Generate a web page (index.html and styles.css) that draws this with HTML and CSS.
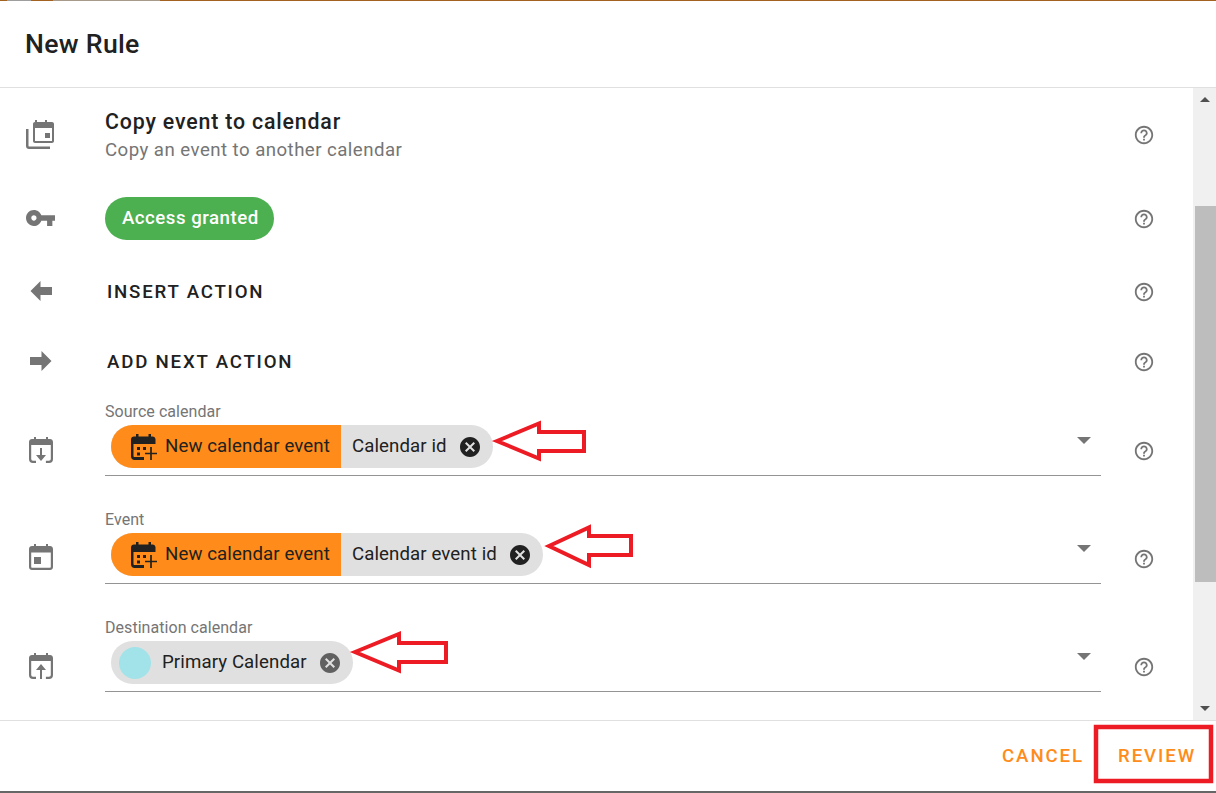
FILE: index.html
```html
<!DOCTYPE html>
<html lang="en">
<head>
<meta charset="utf-8">
<title>New Rule</title>
<link rel="stylesheet" href="styles.css">
</head>
<body>
<div class="dialog">
  <header class="head"><h1 class="title">New Rule</h1></header>
  <div class="middle">
    <main class="rows">
      <section class="row row-first">
        <div class="lead"><svg class="ic-copy" viewBox="0 0 30 30"><path fill="#757575" d="M9 0h2v2h8V0h2v2h5c1.100 0 2 .9 2 2v17c0 1.100-.9 2-2 2H9c-1.100 0-2-.9-2-2V4c0-1.100.9-2 2-2zM9 8v13h17V8z"/><path fill="#757575" d="M19 13h5v5h-5z"/><path fill="#757575" d="M0 9h2.500v17c0 .3.200.500.500.500h21V29H3c-1.700 0-3-1.300-3-3z"/></svg></div>
        <div class="main">
          <div class="name">Copy event to calendar</div>
          <div class="desc">Copy an event to another calendar</div>
        </div>
        <div class="help"><svg class="ic-help" viewBox="0 0 24 24"><path d="M11 18h2v-2h-2v2zm1-16C6.480 2 2 6.480 2 12s4.480 10 10 10 10-4.480 10-10S17.520 2 12 2zm0 18c-4.410 0-8-3.590-8-8s3.590-8 8-8 8 3.590 8 8-3.590 8-8 8zm0-14c-2.210 0-4 1.790-4 4h2c0-1.100.9-2 2-2s2 .9 2 2c0 2-3 1.750-3 5h2c0-2.250 3-2.500 3-5 0-2.210-1.790-4-4-4z"/></svg></div>
      </section>
      <section class="row row-access">
        <div class="lead"><svg class="ic-key" viewBox="1 6 22 12"><path fill="#757575" d="M12.650 10C11.830 7.670 9.610 6 7 6c-3.310 0-6 2.690-6 6s2.690 6 6 6c2.610 0 4.830-1.670 5.650-4H17v4h4v-4h2v-4H12.650zM7 14c-1.100 0-2-.9-2-2s.9-2 2-2 2 .9 2 2-.9 2-2 2z"/></svg></div>
        <div class="main"><span class="badge">Access granted</span></div>
        <div class="help"><svg class="ic-help" viewBox="0 0 24 24"><path d="M11 18h2v-2h-2v2zm1-16C6.480 2 2 6.480 2 12s4.480 10 10 10 10-4.480 10-10S17.520 2 12 2zm0 18c-4.410 0-8-3.590-8-8s3.590-8 8-8 8 3.590 8 8-3.590 8-8 8zm0-14c-2.210 0-4 1.790-4 4h2c0-1.100.9-2 2-2s2 .9 2 2c0 2-3 1.750-3 5h2c0-2.250 3-2.500 3-5 0-2.210-1.790-4-4-4z"/></svg></div>
      </section>
      <section class="row row-action">
        <div class="lead"><svg class="ic-arrow" viewBox="0 0 22 20"><path fill="#757575" d="M0.500 10 10.500 0v6H22v8H10.500v6z"/></svg></div>
        <div class="main"><span class="action">INSERT ACTION</span></div>
        <div class="help"><svg class="ic-help" viewBox="0 0 24 24"><path d="M11 18h2v-2h-2v2zm1-16C6.480 2 2 6.480 2 12s4.480 10 10 10 10-4.480 10-10S17.520 2 12 2zm0 18c-4.410 0-8-3.590-8-8s3.590-8 8-8 8 3.590 8 8-3.590 8-8 8zm0-14c-2.210 0-4 1.790-4 4h2c0-1.100.9-2 2-2s2 .9 2 2c0 2-3 1.750-3 5h2c0-2.250 3-2.500 3-5 0-2.210-1.790-4-4-4z"/></svg></div>
      </section>
      <section class="row row-action">
        <div class="lead"><svg class="ic-arrow" viewBox="0 0 22 20"><path fill="#757575" d="M21.500 10 11.500 0v6H0v8h11.500v6z"/></svg></div>
        <div class="main"><span class="action">ADD NEXT ACTION</span></div>
        <div class="help"><svg class="ic-help" viewBox="0 0 24 24"><path d="M11 18h2v-2h-2v2zm1-16C6.480 2 2 6.480 2 12s4.480 10 10 10 10-4.480 10-10S17.520 2 12 2zm0 18c-4.410 0-8-3.590-8-8s3.590-8 8-8 8 3.590 8 8-3.590 8-8 8zm0-14c-2.210 0-4 1.790-4 4h2c0-1.100.9-2 2-2s2 .9 2 2c0 2-3 1.750-3 5h2c0-2.250 3-2.500 3-5 0-2.210-1.790-4-4-4z"/></svg></div>
      </section>
      <section class="row row-field">
        <div class="lead"><svg class="ic-cal" viewBox="0 0 24 26"><path fill="#757575" d="M5 0h2v2h10V0h2v2h2c1.700 0 3 1.300 3 3v3H0V5c0-1.700 1.300-3 3-3h2z"/><path fill="none" stroke="#757575" stroke-width="2.200" d="M1.100 8v14c0 1.600 1.300 2.900 2.900 2.900h3M16.900 24.900H20c1.600 0 2.900-1.300 2.900-2.900V8"/><path fill="#757575" d="M11 11h2v7h4l-5 6-5-6h4z"/></svg></div>
        <div class="main field">
          <label class="label">Source calendar</label>
          <div class="input">
            <div class="chip">
              <span class="chip-src"><svg class="ic-new" viewBox="0 0 26 26"><path fill="#212121" d="M5 0h2.500v2.500h10V0H20v2.500h1.500c1.700 0 3 1.300 3 3V10H2.500v12c0 .6.400 1 1 1H13v3H3.500C1.500 26 0 24.500 0 22.500v-17c0-1.700 1.300-3 3-3h2z"/><path fill="#212121" d="M6 13h3v3H6zM12 13h3v3h-3zM6 18.500h3v3H6z"/><path fill="none" stroke="#212121" stroke-width="1.700" d="M20 13v13M14 19.500h12"/></svg><span class="chip-text">New calendar event</span></span>
              <span class="chip-val"><span class="chip-text">Calendar id</span><svg class="ic-x" viewBox="2 2 20 20"><path fill="#212121" d="M12 2C6.470 2 2 6.470 2 12s4.470 10 10 10 10-4.470 10-10S17.530 2 12 2zm5 13.590L15.590 17 12 13.410 8.410 17 7 15.590 10.590 12 7 8.410 8.410 7 12 10.590 15.590 7 17 8.410 13.410 12 17 15.590z"/></svg></span>
            </div>
            <span class="caret"></span>
          </div>
        </div>
        <div class="help"><svg class="ic-help" viewBox="0 0 24 24"><path d="M11 18h2v-2h-2v2zm1-16C6.480 2 2 6.480 2 12s4.480 10 10 10 10-4.480 10-10S17.520 2 12 2zm0 18c-4.410 0-8-3.590-8-8s3.590-8 8-8 8 3.590 8 8-3.590 8-8 8zm0-14c-2.210 0-4 1.790-4 4h2c0-1.100.9-2 2-2s2 .9 2 2c0 2-3 1.750-3 5h2c0-2.250 3-2.500 3-5 0-2.210-1.790-4-4-4z"/></svg></div>
      </section>
      <section class="row row-field">
        <div class="lead"><svg class="ic-cal ic-event" viewBox="0 0 24 26"><path fill="#757575" d="M5 0h2v2h10V0h2v2h2c1.700 0 3 1.300 3 3v18c0 1.700-1.300 3-3 3H3c-1.700 0-3-1.300-3-3V5c0-1.700 1.300-3 3-3h2zM2.200 8.500v14.500c0 .5.300.8.800.8h18c.5 0 .8-.3.800-.8V8.500z"/><path fill="#757575" d="M5 13h7v7H5z"/></svg></div>
        <div class="main field">
          <label class="label">Event</label>
          <div class="input">
            <div class="chip">
              <span class="chip-src"><svg class="ic-new" viewBox="0 0 26 26"><path fill="#212121" d="M5 0h2.500v2.500h10V0H20v2.500h1.500c1.700 0 3 1.300 3 3V10H2.500v12c0 .6.400 1 1 1H13v3H3.500C1.500 26 0 24.500 0 22.500v-17c0-1.700 1.300-3 3-3h2z"/><path fill="#212121" d="M6 13h3v3H6zM12 13h3v3h-3zM6 18.500h3v3H6z"/><path fill="none" stroke="#212121" stroke-width="1.700" d="M20 13v13M14 19.500h12"/></svg><span class="chip-text">New calendar event</span></span>
              <span class="chip-val"><span class="chip-text">Calendar event id</span><svg class="ic-x" viewBox="2 2 20 20"><path fill="#212121" d="M12 2C6.470 2 2 6.470 2 12s4.470 10 10 10 10-4.470 10-10S17.530 2 12 2zm5 13.590L15.590 17 12 13.410 8.410 17 7 15.590 10.590 12 7 8.410 8.410 7 12 10.590 15.590 7 17 8.410 13.410 12 17 15.590z"/></svg></span>
            </div>
            <span class="caret"></span>
          </div>
        </div>
        <div class="help"><svg class="ic-help" viewBox="0 0 24 24"><path d="M11 18h2v-2h-2v2zm1-16C6.480 2 2 6.480 2 12s4.480 10 10 10 10-4.480 10-10S17.520 2 12 2zm0 18c-4.410 0-8-3.590-8-8s3.590-8 8-8 8 3.590 8 8-3.590 8-8 8zm0-14c-2.210 0-4 1.790-4 4h2c0-1.100.9-2 2-2s2 .9 2 2c0 2-3 1.750-3 5h2c0-2.250 3-2.500 3-5 0-2.210-1.790-4-4-4z"/></svg></div>
      </section>
      <section class="row row-field">
        <div class="lead"><svg class="ic-cal" viewBox="0 0 24 26"><path fill="#757575" d="M5 0h2v2h10V0h2v2h2c1.700 0 3 1.300 3 3v3H0V5c0-1.700 1.300-3 3-3h2z"/><path fill="none" stroke="#757575" stroke-width="2.200" d="M1.100 8v14c0 1.600 1.300 2.900 2.900 2.900h3M16.900 24.900H20c1.600 0 2.900-1.300 2.900-2.900V8"/><path fill="#757575" d="M12 11l5 6h-4v9h-2v-9H7z"/></svg></div>
        <div class="main field">
          <label class="label">Destination calendar</label>
          <div class="input">
            <div class="chip chip-plain">
              <span class="avatar"></span>
              <span class="plain-text chip-text">Primary Calendar</span>
              <svg class="ic-x" viewBox="2 2 20 20"><path fill="#616161" d="M12 2C6.470 2 2 6.470 2 12s4.470 10 10 10 10-4.470 10-10S17.530 2 12 2zm5 13.590L15.590 17 12 13.410 8.410 17 7 15.590 10.590 12 7 8.410 8.410 7 12 10.590 15.590 7 17 8.410 13.410 12 17 15.590z"/></svg>
            </div>
            <span class="caret"></span>
          </div>
        </div>
        <div class="help"><svg class="ic-help" viewBox="0 0 24 24"><path d="M11 18h2v-2h-2v2zm1-16C6.480 2 2 6.480 2 12s4.480 10 10 10 10-4.480 10-10S17.520 2 12 2zm0 18c-4.410 0-8-3.590-8-8s3.590-8 8-8 8 3.590 8 8-3.590 8-8 8zm0-14c-2.210 0-4 1.790-4 4h2c0-1.100.9-2 2-2s2 .9 2 2c0 2-3 1.750-3 5h2c0-2.250 3-2.500 3-5 0-2.210-1.790-4-4-4z"/></svg></div>
      </section>
    </main>
    <div class="scrollbar">
      <span class="sb-up"></span>
      <span class="sb-thumb"></span>
      <span class="sb-down"></span>
    </div>
  </div>
  <footer class="foot">
    <button class="btn">CANCEL</button>
    <button class="btn">REVIEW</button>
  </footer>
</div>
<svg class="notes" viewBox="0 0 1216 793">
  <path class="note" d="M497 441 539 423.500V432H584V451H539V458.500Z"/>
  <path class="note" d="M549 546 589 527.500V536H631V555H589V565Z"/>
  <path class="note" d="M355 652 399 634V643H446V662H399V670.500Z"/>
  <rect class="note-box" x="1096" y="727" width="115" height="54"/>
</svg>
</body>
</html>
```
FILE: styles.css
```css
* { box-sizing: border-box; }
html, body { margin: 0; height: 100%; overflow: hidden; }
body {
  font-family: Roboto, "Liberation Sans", sans-serif;
  color: #212121;
  background: #fff;
  position: relative;
}
.dialog {
  width: 1216px;
  height: 793px;
  display: flex;
  flex-direction: column;
  border-top: 1px solid #a3621f;
  border-bottom: 2px solid #666;
  position: relative;
}
.dialog::before {
  content: "";
  position: absolute;
  left: 0;
  top: -1px;
  width: 160px;
  height: 1px;
  background: linear-gradient(to right, transparent 7px, #9e9e9e 7px, #9e9e9e 31px, transparent 31px, transparent 53px, #a89a8a 53px, #a89a8a 160px);
}
.head {
  height: 87px;
  flex: none;
  display: flex;
  align-items: center;
  padding: 0 25px;
  border-bottom: 1px solid #e0e0e0;
}
.title {
  margin: 0;
  font-size: 26.670px;
  font-weight: 500;
  letter-spacing: 0.300px;
}
.middle {
  height: 632px;
  flex: none;
  display: flex;
}
.rows { flex: 1; min-width: 0; }
.row { display: flex; align-items: center; }
.row-first { height: 92px; padding-top: 2px; }
.row-first .main { padding-top: 2px; }
.row-first .help { margin-top: -2px; }
.row-access { height: 76px; }
.row-action { height: 70px; }
.row-action .main { padding-top: 2px; }
.row-field { height: 108px; }
.lead {
  width: 105px;
  flex: none;
  display: flex;
  padding-left: 26px;
}
.main { width: 996px; flex: none; }
.help {
  flex: 1;
  display: flex;
  justify-content: center;
  padding: 1px 7px 0 0;
}
.ic-help { width: 22px; height: 22px; fill: #757575; display: block; }
.ic-copy { width: 30px; height: 30px; display: block; }
.ic-key { width: 29px; height: 16px; display: block; }
.ic-arrow { width: 22px; height: 20px; display: block; margin-left: 4px; }
.ic-cal { width: 24px; height: 26px; display: block; margin-left: 3px; }
.ic-event { margin-top: -2px; }
.name {
  font-size: 21.330px;
  font-weight: 500;
  line-height: 28px;
  letter-spacing: 0.830px;
}
.desc {
  font-size: 18.670px;
  line-height: 28px;
  color: #757575;
  letter-spacing: 0.450px;
}
.badge {
  display: inline-flex;
  align-items: center;
  height: 43px;
  padding: 0 15px 0 17px;
  border-radius: 22px;
  background: #4caf50;
  color: #fff;
  font-size: 18.670px;
  font-weight: 500;
  letter-spacing: 0.500px;
}
.action {
  margin-left: 2px;
  font-size: 18.670px;
  font-weight: 500;
  letter-spacing: 1.800px;
}
.field { align-self: flex-start; padding-top: 7px; }
.label {
  display: block;
  height: 22px;
  font-size: 16px;
  line-height: 18px;
  color: #757575;
  letter-spacing: 0.050px;
}
.input {
  display: flex;
  align-items: flex-start;
  justify-content: space-between;
  height: 51px;
  border-bottom: 1px solid #949494;
  padding: 0 10px 0 6px;
}
.chip {
  display: flex;
  height: 43px;
  border-radius: 22px;
  overflow: hidden;
  background: #e0e0e0;
  font-size: 18.670px;
  white-space: nowrap;
}
.chip-text { padding-bottom: 2px; letter-spacing: 0.100px; }
.chip-src {
  display: flex;
  align-items: center;
  gap: 8px;
  padding: 0 11px 0 20px;
  background: #ff8c1a;
}
.ic-new { width: 26px; height: 26px; display: block; flex: none; }
.chip-val {
  display: flex;
  align-items: center;
  padding: 0 13px 0 11px;
}
.ic-x { width: 20px; height: 20px; display: block; flex: none; margin-left: 13px; }
.chip-plain { align-items: center; padding: 0 13px 0 8px; }
.avatar {
  width: 32px;
  height: 32px;
  border-radius: 50%;
  background: #a1e3e8;
  flex: none;
}
.plain-text { margin-left: 11px; }
.caret {
  width: 0;
  height: 0;
  margin-top: 12px;
  border-left: 7px solid transparent;
  border-right: 7px solid transparent;
  border-top: 7px solid #757575;
}
.scrollbar {
  width: 23px;
  flex: none;
  background: #f0f0f0;
  position: relative;
}
.sb-up, .sb-down {
  position: absolute;
  left: 7px;
  width: 0;
  height: 0;
  border-left: 5px solid transparent;
  border-right: 5px solid transparent;
}
.sb-up { top: 9px; border-bottom: 5px solid #505050; }
.sb-down { bottom: 9px; border-top: 5px solid #505050; }
.sb-thumb {
  position: absolute;
  left: 2px;
  right: 0;
  top: 118px;
  height: 376px;
  background: #bdbdbd;
}
.foot {
  flex: 1;
  display: flex;
  justify-content: flex-end;
  align-items: center;
  gap: 34px;
  padding: 0 20px 0 0;
  border-top: 1px solid #e0e0e0;
}
.btn {
  border: 0;
  padding: 0;
  background: none;
  font-family: inherit;
  font-size: 18.670px;
  font-weight: 500;
  letter-spacing: 1.900px;
  color: #ff8c1a;
}
.notes {
  position: absolute;
  left: 0;
  top: 0;
  width: 1216px;
  height: 793px;
  pointer-events: none;
}
.note { fill: #fff; stroke: #ed1c24; stroke-width: 4; }
.note-box { fill: none; stroke: #ed1c24; stroke-width: 4.500; }
```
